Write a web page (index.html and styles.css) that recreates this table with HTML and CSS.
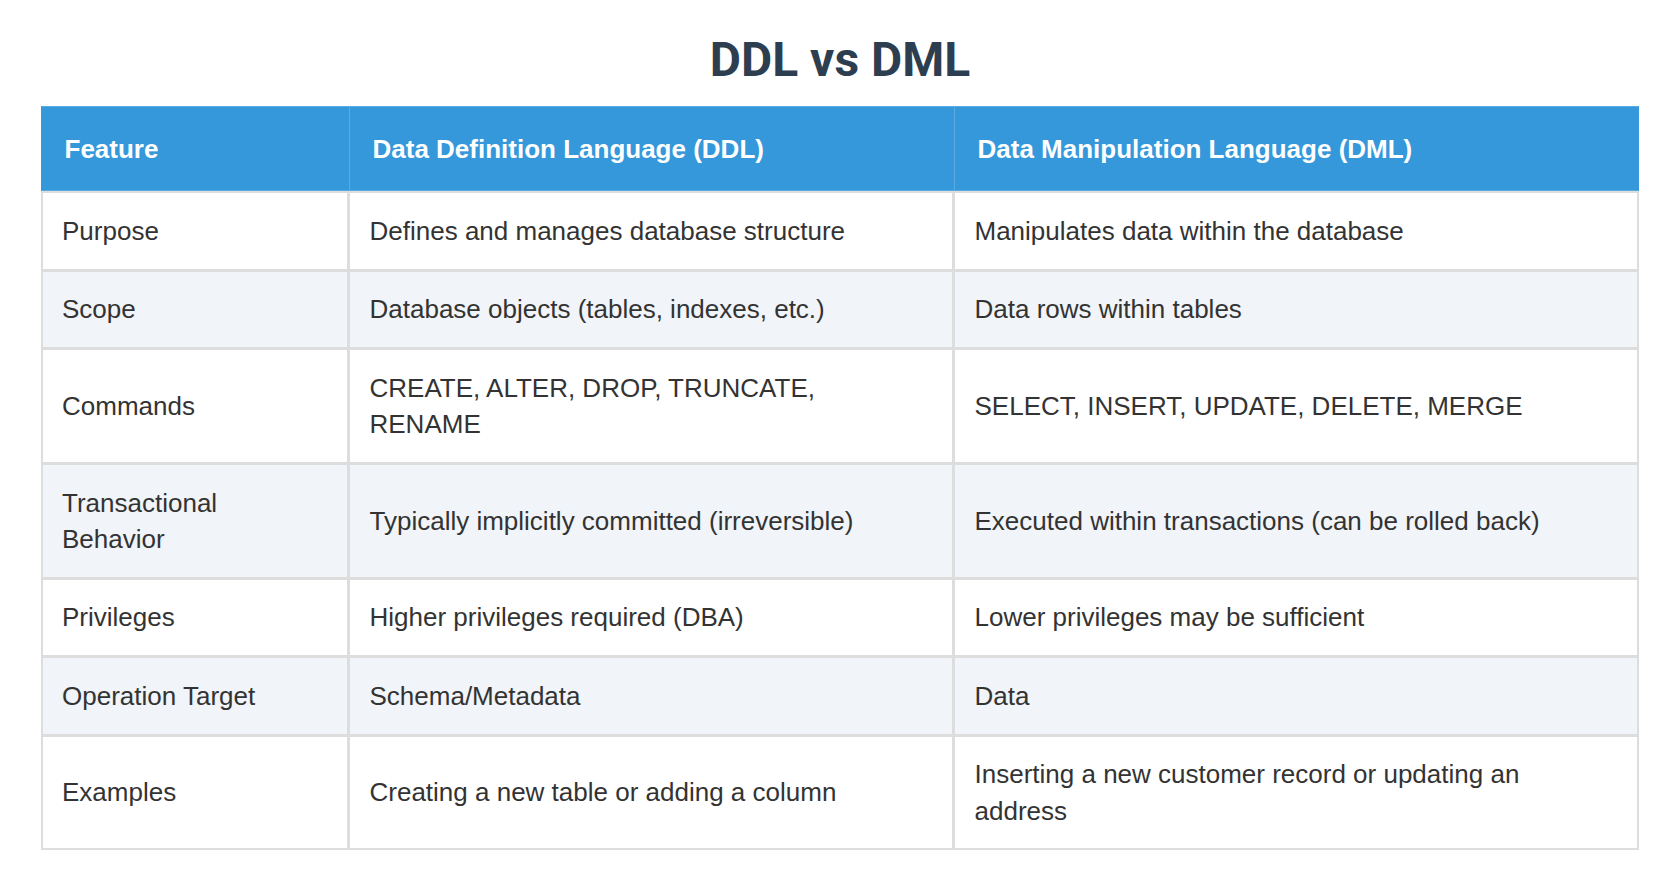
FILE: index.html
```html
<!DOCTYPE html>
<html lang="en">
<head>
<meta charset="utf-8">
<title>DDL vs DML</title>
<link rel="stylesheet" href="styles.css">
</head>
<body>
<div class="page">
  <h1 class="title">DDL vs DML</h1>
  <table class="compare">
    <colgroup>
      <col class="c1">
      <col class="c2">
      <col class="c3">
    </colgroup>
    <thead>
      <tr>
        <th>Feature</th>
        <th>Data Definition Language (DDL)</th>
        <th>Data Manipulation Language (DML)</th>
      </tr>
    </thead>
    <tbody>
      <tr>
        <td>Purpose</td>
        <td>Defines and manages database structure</td>
        <td>Manipulates data within the database</td>
      </tr>
      <tr>
        <td>Scope</td>
        <td>Database objects (tables, indexes, etc.)</td>
        <td>Data rows within tables</td>
      </tr>
      <tr>
        <td>Commands</td>
        <td>CREATE, ALTER, DROP, TRUNCATE, RENAME</td>
        <td>SELECT, INSERT, UPDATE, DELETE, MERGE</td>
      </tr>
      <tr>
        <td>Transactional Behavior</td>
        <td>Typically implicitly committed (irreversible)</td>
        <td>Executed within transactions (can be rolled back)</td>
      </tr>
      <tr>
        <td>Privileges</td>
        <td>Higher privileges required (DBA)</td>
        <td>Lower privileges may be sufficient</td>
      </tr>
      <tr>
        <td>Operation Target</td>
        <td>Schema/Metadata</td>
        <td>Data</td>
      </tr>
      <tr>
        <td>Examples</td>
        <td>Creating a new table or adding a column</td>
        <td>Inserting a new customer record or updating an address</td>
      </tr>
    </tbody>
  </table>
</div>
</body>
</html>
```

FILE: styles.css
```css
html, body {
  margin: 0;
  padding: 0;
  background: #ffffff;
}

.page {
  padding: 33px 41px 0 41px;
  font-family: "Liberation Sans", Arial, sans-serif;
}

.title {
  margin: 0 0 19px 0;
  font-family: Roboto, "Liberation Sans", sans-serif;
  font-weight: 700;
  font-size: 48px;
  line-height: 54px;
  color: #2c3e50;
  text-align: center;
}

.compare {
  width: 100%;
  table-layout: fixed;
  border-collapse: separate;
  border-spacing: 0;
  font-size: 26px;
  line-height: 36.4px;
}

.c1 { width: 308px; }
.c2 { width: 605px; }
.c3 { width: auto; }

.compare th {
  background: #3598db;
  color: #ffffff;
  font-weight: 700;
  text-align: left;
  padding: 23.5px 24px 23.5px 22.5px;
  border-top: 1px solid #5aabe2;
  border-bottom: 1px solid #5aabe2;
  border-left: 1px solid #3598db;
  border-right: 0;
}

.compare th + th {
  border-left: 1px solid #5aabe2;
}

.compare th:last-child {
  border-right: 1px solid #3598db;
}

.compare td {
  color: #333333;
  text-align: left;
  vertical-align: middle;
  padding: 19.5px 26px 19.5px 19.5px;
  border-top: 1px solid #dddddd;
  border-left: 1px solid #dddddd;
  border-right: 2px solid #dddddd;
  border-bottom: 2px solid #dddddd;
  background: #ffffff;
}

.compare tbody tr:first-child td {
  border-top-width: 2px;
}

.compare td:first-child {
  border-left-width: 2px;
  padding-left: 19px;
}

.compare tbody tr:nth-child(even) td {
  background: #f1f4f8;
}
```
